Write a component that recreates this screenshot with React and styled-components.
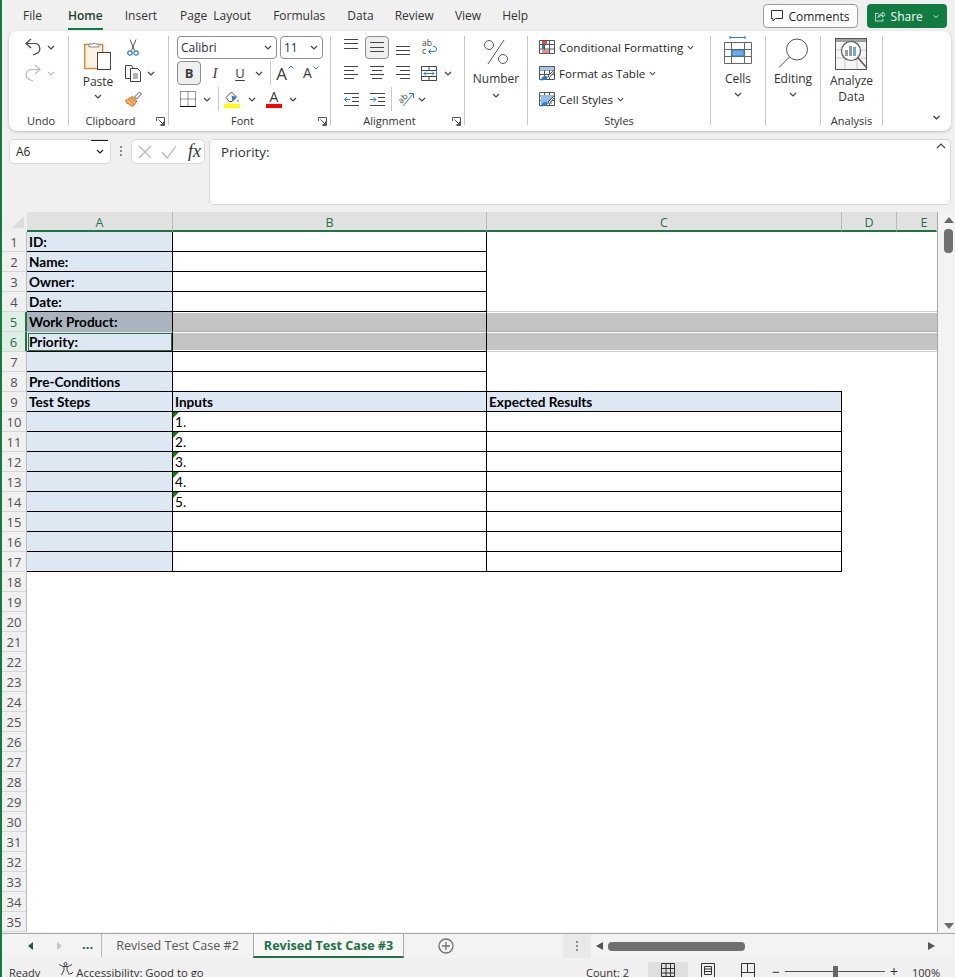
import React from 'react';
import styled, { createGlobalStyle } from 'styled-components';

const GlobalStyle = createGlobalStyle`
  html, body {
    margin: 0;
    padding: 0;
    background: #f0f0f0;
  }
  * { box-sizing: border-box; }
`;

const green = '#107c41';
const ink = '#3b3b3b';

const Window = styled.div`
  width: 955px;
  height: 977px;
  overflow: hidden;
  border-left: 2px solid ${green};
  background: #f0f0f0;
  color: #262626;
  font-family: "Open Sans", "Noto Sans", sans-serif;
  font-size: 12px;
`;

/* title row */
const TitleRow = styled.div`
  display: flex;
  align-items: center;
  height: 31px;
  padding: 0 8px 0 21px;
`;

const MenuTab = styled.div`
  position: relative;
  margin-right: ${(p) => p.$gap}px;
  padding-bottom: 1px;
  font-size: 12px;
  word-spacing: 3px;
  font-weight: ${(p) => (p.$active ? 600 : 400)};
  color: ${(p) => (p.$active ? '#1f3d2c' : '#333')};
  &::after {
    content: '';
    display: ${(p) => (p.$active ? 'block' : 'none')};
    position: absolute;
    left: 0;
    right: 0;
    bottom: -5px;
    height: 2px;
    background: ${green};
  }
`;

const TitleActions = styled.div`
  display: flex;
  gap: 9px;
  margin-left: auto;
  padding-top: 1px;
`;

const CommentsButton = styled.div`
  display: flex;
  align-items: center;
  justify-content: center;
  gap: 5px;
  width: 95px;
  height: 24px;
  background: #fff;
  border: 1px solid #9a9a9a;
  border-radius: 4px;
`;

const ShareButton = styled.div`
  display: flex;
  align-items: center;
  gap: 5px;
  width: 80px;
  height: 24px;
  padding-left: 8px;
  background: ${green};
  color: #fff;
  border-radius: 4px;
`;

/* ribbon */
const Ribbon = styled.div`
  display: flex;
  width: 942px;
  height: 100px;
  margin-left: 7px;
  background: #fff;
  border-radius: 8px;
  box-shadow: 0 1px 3px rgba(0, 0, 0, 0.22);
`;

const Group = styled.div`
  position: relative;
  display: flex;
  flex-direction: column;
  width: ${(p) => p.$w}px;
  height: 89px;
  margin-top: 5px;
  border-right: 1px solid #c9c9c9;
`;

const GroupBody = styled.div`
  display: flex;
  flex: none;
  flex-direction: ${(p) => (p.$row ? 'row' : 'column')};
  align-items: ${(p) => p.$align || 'stretch'};
  gap: ${(p) => (p.$row ? 0 : 4)}px;
  height: 78px;
  padding-left: ${(p) => p.$pad || 0}px;
`;

const GroupLabel = styled.div`
  flex: none;
  height: 14px;
  line-height: 14px;
  padding-left: ${(p) => p.$left || 0}px;
  padding-right: ${(p) => p.$right || 0}px;
  font-size: 11px;
  text-align: center;
  color: #333;
`;

const Launcher = styled.div`
  position: absolute;
  top: 81px;
  right: 3px;
  line-height: 0;
`;

const ToolRow = styled.div`
  display: flex;
  align-items: center;
  flex: none;
  height: 22px;
`;

const ToolColumn = styled.div`
  display: flex;
  flex-direction: column;
  gap: 4px;
  margin-left: ${(p) => p.$left || 0}px;
`;

const Tool = styled.div`
  display: flex;
  align-items: center;
  justify-content: center;
  flex: none;
  width: ${(p) => p.$w}px;
  color: ${ink};
  line-height: 1;
`;

const PressedTool = styled(Tool)`
  height: ${(p) => p.$h}px;
  margin: 0 ${(p) => p.$m || 0}px;
  background: #efefef;
  border: 1px solid #8f8f8f;
  border-radius: 4px;
`;

const ToolDivider = styled.div`
  flex: none;
  width: 1px;
  height: 24px;
  margin-left: ${(p) => p.$left || 0}px;
  background: #c9c9c9;
`;

const FontSelect = styled.div`
  display: flex;
  align-items: center;
  justify-content: space-between;
  width: ${(p) => p.$w}px;
  height: 23px;
  margin-right: 3px;
  padding: 0 4px 0 3px;
  border: 1px solid #8f8f8f;
  border-radius: 4px;
  font-size: 12px;
  color: #2a2a40;
`;

const LetterBold = styled.span`
  font-weight: 700;
  font-size: 13px;
`;

const LetterItalic = styled.span`
  font-family: "Liberation Serif", serif;
  font-style: italic;
  font-size: 15px;
`;

const LetterUnderline = styled.span`
  font-size: 13px;
  text-decoration: underline;
  text-underline-offset: 2px;
`;

const LetterGrow = styled.span`
  display: flex;
  align-items: flex-start;
  gap: 1px;
  font-size: ${(p) => p.$size}px;
`;

const PasteButton = styled.div`
  display: flex;
  flex-direction: column;
  align-items: center;
  width: 38px;
`;

const BigIconButton = styled.div`
  display: flex;
  flex-direction: column;
  align-items: center;
  padding-top: ${(p) => p.$top}px;
  width: 100%;
`;

const BigLabel = styled.div`
  margin-top: ${(p) => p.$mt}px;
  margin-bottom: ${(p) => p.$mb || 0}px;
  line-height: 16px;
  font-size: 12px;
  text-align: center;
  color: #333;
`;

const StyleRow = styled.div`
  display: flex;
  align-items: center;
  gap: 4px;
  height: 22px;
  font-size: 11.6px;
  white-space: nowrap;
`;

const Collapse = styled.div`
  align-self: flex-end;
  margin: 0 9px 11px auto;
  line-height: 0;
`;

/* formula bar */
const FormulaBar = styled.div`
  display: flex;
  margin: 8px 0 7px 7px;
  height: 66px;
`;

const NameBox = styled.div`
  position: relative;
  display: flex;
  align-items: center;
  justify-content: space-between;
  width: 102px;
  height: 25px;
  padding: 0 5px 0 6px;
  background: #fff;
  border: 1px solid #d8d8d8;
  border-radius: 5px;
  &::after {
    content: '';
    position: absolute;
    top: 0;
    right: 2px;
    width: 17px;
    height: 1px;
    background: #222;
  }
`;

const GripDots = styled.div`
  display: flex;
  flex-direction: column;
  align-items: center;
  gap: 2px;
  width: ${(p) => p.$w}px;
  padding-top: ${(p) => p.$top}px;
  & > i {
    width: 2px;
    height: 2px;
    background: #8a8a8a;
  }
`;

const FxBox = styled.div`
  display: flex;
  align-items: center;
  gap: 8px;
  width: 74px;
  height: 25px;
  padding: 0 3px 0 5px;
  background: #fff;
  border: 1px solid #d8d8d8;
  border-radius: 5px;
`;

const FxLabel = styled.span`
  margin-left: auto;
  font-family: "Liberation Serif", serif;
  font-style: italic;
  font-size: 18px;
  color: #333;
`;

const FormulaInput = styled.div`
  display: flex;
  justify-content: space-between;
  width: 742px;
  height: 66px;
  margin-left: 4px;
  padding: 3px 4px 0 11px;
  background: #fff;
  border: 1px solid #d8d8d8;
  border-radius: 5px;
  font-size: 13.3px;
  color: #333;
`;

/* sheet */
const SheetArea = styled.div`
  display: flex;
  height: 721px;
`;

const Sheet = styled.div`
  display: grid;
  grid-template-columns: 25px 146px 314px 355px 55px 40px;
  grid-auto-rows: 20px;
  width: 936px;
  height: 720px;
  border-right: 1px solid #a8a8a8;
  background: #fff;
`;

const Corner = styled.div`
  position: relative;
  background: #efefef;
  border-bottom: 2px solid #efefef;
  &::after {
    content: '';
    position: absolute;
    right: 3px;
    bottom: 2px;
    border-style: solid;
    border-width: 0 0 12px 12px;
    border-color: transparent transparent #dcdcdc transparent;
  }
`;

const ColHead = styled.div`
  display: flex;
  align-items: center;
  justify-content: center;
  background: #e1e1e1;
  border-right: 1px solid ${(p) => (p.$last ? '#e1e1e1' : '#b9b9b9')};
  border-bottom: 2px solid #217346;
  font-size: 12.5px;
  color: #217346;
  padding: 2px 0 0 ${(p) => (p.$last ? 15 : 0)}px;
`;

const RowHead = styled.div`
  display: flex;
  align-items: center;
  justify-content: center;
  padding-top: 1px;
  font-size: 13px;
  color: ${(p) => (p.$active ? '#217346' : '#505050')};
  background: ${(p) => (p.$active ? '#e0efe5' : '#f0f0f0')};
  border-bottom: 1px solid #d6d6d6;
  border-right: ${(p) => (p.$active ? '2px solid #217346' : '1px solid #bdbdbd')};
`;

const fills = {
  blue: '#dde8f3',
  gray: '#c4c4c4',
  dim: '#a9b4bf',
  none: '#fff',
};

const bottoms = {
  black: '1px solid #000',
  light: '1px solid #cfcfcf',
  mid: '1px solid #b0b0b0',
  none: '1px solid transparent',
};

const Cell = styled.div`
  position: relative;
  display: flex;
  align-items: center;
  padding: 1px 2px 0;
  overflow: visible;
  white-space: nowrap;
  font-family: "Lato", "Open Sans", sans-serif;
  font-size: 13.6px;
  font-weight: ${(p) => (p.$bold ? 700 : 400)};
  color: #000;
  background: ${(p) => fills[p.$fill || 'none']};
  border-right: ${(p) => (p.$right ? '1px solid #000' : 'none')};
  border-bottom: ${(p) => bottoms[p.$bottom || 'none']};
  ${(p) => p.$band === 'top' && 'box-shadow: inset 0 1px 0 #fff;'}
  ${(p) => p.$band === 'both' && 'box-shadow: inset 0 1px 0 #fff, inset 0 -1px 0 #fff;'}
  ${(p) => p.$sel && `outline: 1px solid #217346; outline-offset: -2px;`}
  ${(p) => p.$flag && `
    &::before {
      content: '';
      position: absolute;
      top: 0;
      left: 0;
      border-style: solid;
      border-width: 6px 6px 0 0;
      border-color: #0b7a0b transparent transparent transparent;
    }
  `}
`;

const VScroll = styled.div`
  display: flex;
  flex-direction: column;
  align-items: center;
  width: 17px;
  height: 720px;
  padding: 5px 0 3px 4px;
  background: #f3f3f3;
`;

const VThumb = styled.div`
  width: 9px;
  height: 24px;
  margin: 6px 0 auto;
  background: #707070;
  border-radius: 4px;
`;

const Arrow = styled.div`
  flex: none;
  width: 0;
  height: 0;
  border-style: solid;
  ${(p) => p.$dir === 'up' && `border-width: 0 5px 6px 5px; border-color: transparent transparent ${p.$color} transparent;`}
  ${(p) => p.$dir === 'down' && `border-width: 6px 5px 0 5px; border-color: ${p.$color} transparent transparent transparent;`}
  ${(p) => p.$dir === 'left' && `border-width: 4px ${p.$big ? 7 : 5}px 4px 0; border-color: transparent ${p.$color} transparent transparent;`}
  ${(p) => p.$dir === 'right' && `border-width: 4px 0 4px ${p.$big ? 7 : 5}px; border-color: transparent transparent transparent ${p.$color};`}
`;

/* sheet tabs */
const TabBar = styled.div`
  display: flex;
  align-items: stretch;
  height: 25px;
  background: #f3f3f3;
  border-top: 1px solid #a8a8a8;
`;

const TabNav = styled.div`
  display: flex;
  align-items: center;
  width: ${(p) => p.$w}px;
  padding-left: ${(p) => p.$pad}px;
  gap: ${(p) => p.$gap}px;
`;

const Ellipsis = styled.span`
  margin: -5px 0 0 -4px;
  font-weight: 700;
  font-size: 13px;
  color: #1b5e38;
`;

const SheetTab = styled.div`
  display: flex;
  align-items: center;
  justify-content: center;
  flex: none;
  width: ${(p) => (p.$active ? 151 : 152)}px;
  font-size: 12.6px;
  font-weight: ${(p) => (p.$active ? 700 : 400)};
  color: ${(p) => (p.$active ? '#217346' : '#555')};
  background: ${(p) => (p.$active ? '#f7f7f7' : 'transparent')};
  border-left: 1px solid ${(p) => (p.$active ? '#a8a8a8' : '#b5b5b5')};
  border-right: ${(p) => (p.$active ? '1px solid #a8a8a8' : 'none')};
  border-bottom: 2px solid ${(p) => (p.$active ? '#217346' : 'transparent')};
`;

const AddSheet = styled.div`
  display: flex;
  align-items: center;
  justify-content: center;
  flex: none;
  width: 84px;
`;

const TabGrip = styled.div`
  display: flex;
  align-items: center;
  justify-content: center;
  flex: none;
  width: 28px;
  margin-left: 75px;
  background: #e9e9e9;
`;

const HScroll = styled.div`
  display: flex;
  align-items: center;
  flex: none;
  width: 362px;
  padding-left: 5px;
`;

const HThumb = styled.div`
  width: 137px;
  height: 9px;
  margin: 0 auto 0 5px;
  background: #707070;
  border-radius: 4px;
`;

const HEnd = styled.div`
  margin-right: 18px;
`;

/* status bar */
const StatusBar = styled.div`
  display: flex;
  align-items: flex-start;
  height: 19px;
  margin-top: 4px;
  padding: 0 15px 0 7px;
  font-size: 11px;
  color: #333;
  line-height: 17px;
`;

const StatusText = styled.span`
  margin-left: ${(p) => p.$left || 0}px;
  margin-right: ${(p) => p.$right || 0}px;
  padding-top: 2px;
  font-size: ${(p) => p.$size || 11}px;
`;

const ViewButton = styled.div`
  display: flex;
  justify-content: center;
  width: 40px;
  height: 19px;
  padding-top: 1px;
  background: ${(p) => (p.$active ? '#dfdfdf' : 'transparent')};
`;

const ZoomArea = styled.div`
  display: flex;
  align-items: center;
  height: 15px;
  margin-top: 2px;
  margin-left: 4px;
  gap: 5px;
`;

const ZoomSign = styled.span`
  width: 8px;
  text-align: center;
  font-size: 14px;
  line-height: 15px;
`;

const ZoomTrack = styled.div`
  position: relative;
  width: 100px;
  height: 1px;
  background: #555;
`;

const ZoomThumb = styled.div`
  position: absolute;
  left: 48px;
  top: -5px;
  width: 5px;
  height: 11px;
  background: #666;
`;

const Spacer = styled.div`
  flex: 1;
`;

const ColorBar = styled.div`
  width: 16px;
  height: 4px;
  margin-top: 1px;
  background: ${(p) => p.$color};
`;

const Swatch = styled.div`
  display: flex;
  flex-direction: column;
  align-items: center;
  font-size: 14px;
  line-height: 13px;
`;

/* drawings */
const Chevron = ({ color = '#444', w = 8 }) => (
  <svg width={w} height="5" viewBox="0 0 8 5" fill="none">
    <path d="M1 1l3 3 3-3" stroke={color} strokeWidth="1.2" />
  </svg>
);

const Undo = ({ flip, color }) => (
  <svg width="16" height="18" viewBox="0 0 16 18" fill="none">
    <g transform={flip ? 'matrix(-1 0 0 1 16 0)' : undefined}>
      <path d="M6 1L1 5.5 6 10M1 5.5h8.5a5.2 5.2 0 0 1 1.5 10.2L8 17" stroke={color} strokeWidth="1.2" />
    </g>
  </svg>
);

const PasteIcon = () => (
  <svg width="28" height="31" viewBox="0 0 28 31" fill="none">
    <rect x="0.7" y="4.5" width="18" height="24" fill="#fdf1e2" stroke="#d9873a" strokeWidth="1.4" />
    <path d="M5 7V4h3.5a2 2 0 0 1 3 0H15v3z" fill="#fff" stroke="#8a8a8a" />
    <rect x="13.500" y="12.500" width="13" height="17" fill="#fff" stroke="#444" />
  </svg>
);

const Scissors = () => (
  <svg width="12" height="17" viewBox="0 0 12 17" fill="none">
    <path d="M3 0.5l4.500 11M9 0.500l-4.500 11" stroke="#555" />
    <circle cx="3" cy="14" r="2.200" stroke="#2b7cd3" strokeWidth="1.200" />
    <circle cx="9" cy="14" r="2.200" stroke="#2b7cd3" strokeWidth="1.200" />
  </svg>
);

const CopyIcon = () => (
  <svg width="17" height="17" viewBox="0 0 17 17" fill="none">
    <path d="M5.500 13.500h-5V0.500h6l2 3" stroke="#444" />
    <path d="M5.500 3.500h7l3 3v10h-10z" fill="#fff" stroke="#444" />
    <path d="M8 9h5M8 11h5M8 13h5" stroke="#666" />
  </svg>
);

const BrushIcon = () => (
  <svg width="17" height="16" viewBox="0 0 17 16" fill="none">
    <path d="M0.500 9.500l6.500-4 5 4.500-4 5.500-3.500-1.500L3 12l-1 .5z" fill="#f6b26b" stroke="#d9762a" />
    <path d="M3.500 8l6 6M6 7l5 4.500" stroke="#d9762a" />
    <path d="M9.500 6l5-5 2 2-5 5z" fill="#fff" stroke="#555" />
  </svg>
);

const FontSizeCaret = ({ down }) => (
  <svg width="6" height="4" viewBox="0 0 6 4" fill="none">
    <path d={down ? 'M0.500 0.500L3 3l2.500-2.500' : 'M0.500 3.500L3 1l2.500 2.500'} stroke="#2b7cd3" />
  </svg>
);

const BordersIcon = () => (
  <svg width="16" height="16" viewBox="0 0 16 16" fill="none">
    <path d="M0.500 0.500h15v15M0.500 0.500v15M8 0.500v15M0.500 8h15" stroke="#333" strokeDasharray="1 1" />
    <path d="M0 15.500h16" stroke="#111" />
  </svg>
);

const BucketIcon = () => (
  <svg width="15" height="12" viewBox="0 0 15 12" fill="none">
    <path d="M1 6.500L6.500 1l5 5-4.500 4.500h-3z" stroke="#555" />
    <path d="M6.500 4.500L11.500 6 7.500 10.500z" fill="#2b7cd3" />
    <path d="M13 8l1 2.500h-2z" fill="#2b7cd3" />
  </svg>
);

const Lines = ({ rows, w = 14, h = 14 }) => (
  <svg width={w} height={h} viewBox={`0 0 ${w} ${h}`} fill="none">
    {rows.map(([x1, x2, y]) => (
      <path key={`${x1}-${x2}-${y}`} d={`M${x1} ${y}.5H${x2}`} stroke="#444" />
    ))}
  </svg>
);

const WrapIcon = () => (
  <svg width="16" height="18" viewBox="0 0 16 18" fill="none">
    <text x="1" y="8" fontSize="8.500" fontFamily="Open Sans, sans-serif" fill="#444">ab</text>
    <text x="1" y="16" fontSize="8.500" fontFamily="Open Sans, sans-serif" fill="#444">c</text>
    <path d="M8 13.500h5a2 2 0 0 0 0-5h-1M10 11l-2.500 2.500L10 16" stroke="#2b7cd3" />
  </svg>
);

const MergeIcon = () => (
  <svg width="16" height="15" viewBox="0 0 16 15" fill="none">
    <path d="M0.500 0.500h15v14h-15zM0.500 4.500h15M0.500 10.500h15M8 0.500v4M8 10.500v4" stroke="#444" />
    <path d="M0.500 4.500v6M15.500 4.500v6" stroke="#2b7cd3" />
    <path d="M3 7.500h10M5 5.500l-2 2 2 2M11 5.500l2 2-2 2" stroke="#2b7cd3" />
  </svg>
);

const IndentIcon = ({ right }) => (
  <svg width="15" height="13" viewBox="0 0 15 13" fill="none">
    <path d="M0 0.500h15M8 4.500h7M8 8.500h7M0 12.500h15" stroke="#444" />
    <path d={right ? 'M0 6.500h6M3.500 4l2.500 2.500L3.500 9' : 'M6 6.500H0.500M3 4L0.500 6.500 3 9'} stroke="#2b7cd3" />
  </svg>
);

const OrientIcon = () => (
  <svg width="17" height="16" viewBox="0 0 17 16" fill="none">
    <text x="1" y="11" fontSize="8.500" fontFamily="Open Sans, sans-serif" fill="#444" transform="rotate(-45 5 8)">ab</text>
    <path d="M6 15L16 3M12 2.500h4.500V7" stroke="#2b7cd3" />
  </svg>
);

const PercentIcon = () => (
  <svg width="26" height="26" viewBox="0 0 26 26" fill="none">
    <circle cx="6" cy="6" r="4.500" stroke="#555" />
    <circle cx="20" cy="20" r="4.500" stroke="#555" />
    <path d="M21 1L5 25" stroke="#555" />
  </svg>
);

const CondIcon = () => (
  <svg width="16" height="14" viewBox="0 0 16 14" fill="none">
    <path d="M0.500 0.500h15v13h-15zM5.500 0.500v13M10.500 0.500v13M0.500 4.500h15M0.500 9h15" stroke="#555" />
    <rect x="3" y="1" width="5" height="3" fill="#e8474c" />
    <rect x="3" y="5" width="2" height="4" fill="#2b7cd3" />
    <rect x="3" y="10" width="7" height="3" fill="#f08a8c" />
  </svg>
);

const TableBrushIcon = ({ header }) => (
  <svg width="16" height="15" viewBox="0 0 16 15" fill="none">
    <path d="M0.500 0.500h15v13h-15zM0.500 4h15M5.500 0.500v13M10.500 0.500v13M0.500 8.500h15" stroke="#555" />
    {!header && <rect x="2" y="3" width="11" height="9" fill="#8dbdec" />}
    {header && <rect x="1" y="1" width="14" height="3" fill="#a9c9ec" />}
    <path d="M15.500 3.500L9 10l1.500 1.500 5-6z" fill="#fff" stroke="#555" />
    <path d="M1.500 14.500c1-3 3-5 6-4.500l1.500 1.500c-1 2-4 3-7.500 3z" fill="#2b7cd3" />
  </svg>
);

const CellsIcon = () => (
  <svg width="28" height="28" viewBox="0 0 28 28" fill="none">
    <path d="M6 1.500h15M6 0v3M21 0v3" stroke="#2b7cd3" />
    <path d="M0.500 6.500h27v21h-27zM0.500 13.500h27M0.500 20.500h27M7.500 6.500v21M20.500 6.500v21" stroke="#666" />
    <rect x="8" y="14" width="12" height="6" fill="#6eaae3" stroke="#2b7cd3" />
  </svg>
);

const EditingIcon = () => (
  <svg width="31" height="30" viewBox="0 0 31 30" fill="none">
    <circle cx="19" cy="11.500" r="10.500" fill="#fff" stroke="#555" />
    <path d="M11.500 19L1 29.500" stroke="#555" />
  </svg>
);

const AnalyzeIcon = () => (
  <svg width="33" height="33" viewBox="0 0 33 33" fill="none">
    <rect x="0.500" y="0.500" width="31" height="31" fill="#f5f5f5" stroke="#555" />
    <rect x="1" y="1" width="30" height="3" fill="#a0a0a0" />
    <path d="M1 12h30M1 20h30M10 4v27M22 4v27" stroke="#c9c9c9" />
    <circle cx="16" cy="13" r="9.500" fill="#fff" stroke="#555" strokeWidth="1.200" />
    <rect x="10" y="12" width="3" height="6" fill="#9a9a9a" />
    <rect x="14" y="8" width="3" height="10" fill="#9a9a9a" />
    <rect x="18" y="9" width="3" height="9" fill="#6eaae3" />
    <path d="M23 20l9 10" stroke="#555" strokeWidth="1.400" />
  </svg>
);

const LauncherIcon = () => (
  <svg width="9" height="9" viewBox="0 0 9 9" fill="none">
    <path d="M0.500 4V0.500H8.500M8.500 0.500V8.500H4.500M2.500 2.500l5 5M4.500 7.500h3v-3" stroke="#555" />
  </svg>
);

const BubbleIcon = () => (
  <svg width="12" height="12" viewBox="0 0 12 12" fill="none">
    <path d="M0.500 0.500h11v8h-7l-2.500 2.500v-2.500h-1.500z" stroke="#333" />
  </svg>
);

const ShareIcon = () => (
  <svg width="14" height="13" viewBox="0 0 14 13" fill="none">
    <path d="M4.500 2.500h-4v10h10v-3" stroke="#fff" />
    <path d="M4 8c0-3 2.500-5 6-5V0.800L13.500 4 10 7.200V5C7.500 5 5.500 6 4 8z" stroke="#fff" />
  </svg>
);

const CrossIcon = () => (
  <svg width="16" height="16" viewBox="0 0 16 16" fill="none">
    <path d="M2 2l12 12M14 2L2 14" stroke="#b5b5b5" strokeWidth="1.200" />
  </svg>
);

const CheckIcon = () => (
  <svg width="16" height="14" viewBox="0 0 16 14" fill="none">
    <path d="M1 7l5 6L15 1" stroke="#b5b5b5" strokeWidth="1.200" />
  </svg>
);

const PlusCircle = () => (
  <svg width="16" height="16" viewBox="0 0 16 16" fill="none">
    <circle cx="8" cy="8" r="7" stroke="#707070" strokeWidth="1.300" />
    <path d="M8 4v8M4 8h8" stroke="#707070" strokeWidth="1.300" />
  </svg>
);

const PersonIcon = () => (
  <svg width="15" height="14" viewBox="0 0 15 14" fill="none">
    <circle cx="7.500" cy="2" r="1.500" stroke="#444" />
    <path d="M1 2.500l4 2h5l4-2M6 5v3l-2.500 5M9 5v3l2.500 5" stroke="#444" />
    <path d="M12 11l1 1 2-2" stroke="#444" />
  </svg>
);

const NormalViewIcon = () => (
  <svg width="14" height="15" viewBox="0 0 14 15" fill="none">
    <path d="M0.500 0.500h13v13h-13zM0.500 5.500h13M0.500 10h13M5 0.500v13M9.500 0.500v13" stroke="#333" />
  </svg>
);

const PageViewIcon = () => (
  <svg width="14" height="15" viewBox="0 0 14 15" fill="none">
    <path d="M0.500 0.500h13v14h-13zM3.500 3.500h7v8h-7zM3.500 6h7M3.500 8.500h7" stroke="#333" />
  </svg>
);

const BreakViewIcon = () => (
  <svg width="14" height="15" viewBox="0 0 14 15" fill="none">
    <path d="M0.500 14V0.500h13V14M0.500 9.500h6V0.500M6.500 9.500h7" stroke="#333" />
  </svg>
);

const menus = [
  ['File', 26],
  ['Home', 22, true],
  ['Insert', 23],
  ['Page Layout', 22],
  ['Formulas', 22],
  ['Data', 21],
  ['Review', 21],
  ['View', 21],
  ['Help', 0],
];

const alignTop = [[0, 14, 3], [0, 14, 7], [0, 14, 12]];
const alignMid = [[0, 14, 5], [0, 14, 10], [0, 14, 14]];
const alignBottom = [[0, 14, 10], [0, 14, 14], [0, 14, 18]];
const alignLeft = [[0, 14, 0], [0, 10, 4], [0, 14, 8], [0, 10, 12]];
const alignCenter = [[0, 14, 0], [2, 12, 4], [0, 14, 8], [2, 12, 12]];
const alignRight = [[0, 14, 0], [4, 14, 4], [0, 14, 8], [4, 14, 12]];

const RibbonBar = () => (
  <Ribbon>
    <Group $w={60}>
      <GroupBody $pad={14}>
        <ToolRow>
          <Tool $w={20}><Undo color="#444" /></Tool>
          <Tool $w={16}><Chevron /></Tool>
        </ToolRow>
        <ToolRow>
          <Tool $w={20}><Undo flip color="#bcbcbc" /></Tool>
          <Tool $w={16}><Chevron color="#bcbcbc" /></Tool>
        </ToolRow>
      </GroupBody>
      <GroupLabel $left={5}>Undo</GroupLabel>
    </Group>

    <Group $w={100}>
      <GroupBody $row $pad={10}>
        <PasteButton>
          <BigIconButton $top={4}>
            <PasteIcon />
            <BigLabel $mt={3} $mb={4}>Paste</BigLabel>
            <Chevron />
          </BigIconButton>
        </PasteButton>
        <ToolColumn $left={5}>
          <ToolRow><Tool $w={22}><Scissors /></Tool></ToolRow>
          <ToolRow>
            <Tool $w={22}><CopyIcon /></Tool>
            <Tool $w={14}><Chevron /></Tool>
          </ToolRow>
          <ToolRow><Tool $w={22}><BrushIcon /></Tool></ToolRow>
        </ToolColumn>
      </GroupBody>
      <GroupLabel $right={16}>Clipboard</GroupLabel>
      <Launcher><LauncherIcon /></Launcher>
    </Group>

    <Group $w={162}>
      <GroupBody $pad={8}>
        <ToolRow>
          <FontSelect $w={100}>Calibri<Chevron /></FontSelect>
          <FontSelect $w={43}>11<Chevron /></FontSelect>
        </ToolRow>
        <ToolRow>
          <PressedTool $w={24} $h={24}><LetterBold>B</LetterBold></PressedTool>
          <Tool $w={28}><LetterItalic>I</LetterItalic></Tool>
          <Tool $w={22}><LetterUnderline>U</LetterUnderline></Tool>
          <Tool $w={16}><Chevron /></Tool>
          <ToolDivider $left={3} />
          <Tool $w={28}><LetterGrow $size={17}>A<FontSizeCaret /></LetterGrow></Tool>
          <Tool $w={24}><LetterGrow $size={14}>A<FontSizeCaret down /></LetterGrow></Tool>
        </ToolRow>
        <ToolRow>
          <Tool $w={22}><BordersIcon /></Tool>
          <Tool $w={16}><Chevron /></Tool>
          <ToolDivider $left={3} />
          <Tool $w={26}><Swatch><BucketIcon /><ColorBar $color="#ffff00" /></Swatch></Tool>
          <Tool $w={14}><Chevron /></Tool>
          <Tool $w={30}><Swatch>A<ColorBar $color="#ff0000" /></Swatch></Tool>
          <Tool $w={8}><Chevron /></Tool>
        </ToolRow>
      </GroupBody>
      <GroupLabel $right={14}>Font</GroupLabel>
      <Launcher><LauncherIcon /></Launcher>
    </Group>

    <Group $w={134}>
      <GroupBody $pad={7}>
        <ToolRow>
          <Tool $w={26}><Lines rows={alignTop} h={22} /></Tool>
          <PressedTool $w={24} $h={23} $m={1}><Lines rows={alignMid} h={21} /></PressedTool>
          <Tool $w={26}><Lines rows={alignBottom} h={22} /></Tool>
          <Tool $w={26}><WrapIcon /></Tool>
        </ToolRow>
        <ToolRow>
          <Tool $w={26}><Lines rows={alignLeft} /></Tool>
          <Tool $w={26}><Lines rows={alignCenter} /></Tool>
          <Tool $w={26}><Lines rows={alignRight} /></Tool>
          <Tool $w={26}><MergeIcon /></Tool>
          <Tool $w={12}><Chevron /></Tool>
        </ToolRow>
        <ToolRow>
          <Tool $w={26}><IndentIcon /></Tool>
          <Tool $w={26}><IndentIcon right /></Tool>
          <ToolDivider $left={1} />
          <Tool $w={26}><OrientIcon /></Tool>
          <Tool $w={8}><Chevron /></Tool>
        </ToolRow>
      </GroupBody>
      <GroupLabel $right={16}>Alignment</GroupLabel>
      <Launcher><LauncherIcon /></Launcher>
    </Group>

    <Group $w={63}>
      <GroupBody $align="center">
        <BigIconButton $top={3}>
          <PercentIcon />
          <BigLabel $mt={6} $mb={6}>Number</BigLabel>
          <Chevron />
        </BigIconButton>
      </GroupBody>
    </Group>

    <Group $w={183}>
      <GroupBody $pad={11}>
        <StyleRow><CondIcon />Conditional Formatting<Chevron w={7} /></StyleRow>
        <StyleRow><TableBrushIcon header />Format as Table<Chevron w={7} /></StyleRow>
        <StyleRow><TableBrushIcon />Cell Styles<Chevron w={7} /></StyleRow>
      </GroupBody>
      <GroupLabel>Styles</GroupLabel>
    </Group>

    <Group $w={55}>
      <GroupBody $align="center">
        <BigIconButton $top={0}>
          <CellsIcon />
          <BigLabel $mt={7} $mb={5}>Cells</BigLabel>
          <Chevron />
        </BigIconButton>
      </GroupBody>
    </Group>

    <Group $w={55}>
      <GroupBody $align="center">
        <BigIconButton $top={2}>
          <EditingIcon />
          <BigLabel $mt={3} $mb={5}>Editing</BigLabel>
          <Chevron />
        </BigIconButton>
      </GroupBody>
    </Group>

    <Group $w={62}>
      <GroupBody $align="center">
        <BigIconButton $top={2}>
          <AnalyzeIcon />
          <BigLabel $mt={2}>Analyze<br />Data</BigLabel>
        </BigIconButton>
      </GroupBody>
      <GroupLabel>Analysis</GroupLabel>
    </Group>

    <Collapse><Chevron w={11} color="#333" /></Collapse>
  </Ribbon>
);

const labels = {
  1: 'ID:',
  2: 'Name:',
  3: 'Owner:',
  4: 'Date:',
  5: 'Work Product:',
  6: 'Priority:',
  8: 'Pre-Conditions',
  9: 'Test Steps',
};

const SheetRow = ({ n }) => {
  const inTable = n <= 17;
  const selected = n === 5 || n === 6;
  const band = n === 5 ? 'top' : n === 6 ? 'both' : undefined;
  const gridLine = n === 4 || n === 6 ? 'light' : n === 5 ? 'mid' : 'none';
  const tableLine = n === 5 ? 'mid' : inTable ? 'black' : 'none';
  const stepRow = n >= 10 && n <= 14;
  const lowerTable = n >= 9 && n <= 17;

  return (
    <>
      <RowHead $active={selected}>{n}</RowHead>
      <Cell
        $bold
        $fill={!inTable ? 'none' : n === 5 ? 'dim' : 'blue'}
        $right={inTable}
        $bottom={tableLine}
        $sel={n === 6}
      >
        {labels[n]}
      </Cell>
      <Cell
        $bold={n === 9}
        $fill={selected ? 'gray' : n === 9 ? 'blue' : 'none'}
        $band={band}
        $right={inTable}
        $bottom={tableLine}
        $flag={stepRow}
      >
        {n === 9 && 'Inputs'}
        {stepRow && `${n - 9}.`}
      </Cell>
      <Cell
        $bold={n === 9}
        $fill={selected ? 'gray' : n === 9 ? 'blue' : 'none'}
        $band={band}
        $right={lowerTable}
        $bottom={n === 8 || lowerTable ? 'black' : gridLine}
      >
        {n === 9 && 'Expected Results'}
      </Cell>
      <Cell $fill={selected ? 'gray' : 'none'} $band={band} $bottom={gridLine} />
      <Cell $fill={selected ? 'gray' : 'none'} $band={band} $bottom={gridLine} />
    </>
  );
};

const rowNumbers = Array.from({ length: 35 }, (_, i) => i + 1);

const App = () => (
  <>
    <GlobalStyle />
    <Window>
      <TitleRow>
        {menus.map(([name, gap, active]) => (
          <MenuTab key={name} $gap={gap} $active={active}>{name}</MenuTab>
        ))}
        <TitleActions>
          <CommentsButton><BubbleIcon />Comments</CommentsButton>
          <ShareButton><ShareIcon />Share<Spacer /><Chevron color="#fff" /><span>&nbsp;</span></ShareButton>
        </TitleActions>
      </TitleRow>

      <RibbonBar />

      <FormulaBar>
        <NameBox>A6<Chevron w={10} color="#222" /></NameBox>
        <GripDots $w={20} $top={7}><i /><i /><i /></GripDots>
        <FxBox><CrossIcon /><CheckIcon /><FxLabel>fx</FxLabel></FxBox>
        <FormulaInput>Priority:<svg width="10" height="6" viewBox="0 0 10 6" fill="none"><path d="M1 5l4-4 4 4" stroke="#444" strokeWidth="1.200" /></svg></FormulaInput>
      </FormulaBar>

      <SheetArea>
        <Sheet>
          <Corner />
          {['A', 'B', 'C', 'D', 'E'].map((col) => (
            <ColHead key={col} $last={col === 'E'}>{col}</ColHead>
          ))}
          {rowNumbers.map((n) => <SheetRow key={n} n={n} />)}
        </Sheet>
        <VScroll>
          <Arrow $dir="up" $color="#6a6a6a" />
          <VThumb />
          <Arrow $dir="down" $color="#6a6a6a" />
        </VScroll>
      </SheetArea>

      <TabBar>
        <TabNav $w={99} $pad={26} $gap={24}>
          <Arrow $dir="left" $color="#1b5e38" />
          <Arrow $dir="right" $color="#c4c4c4" />
          <Ellipsis>...</Ellipsis>
        </TabNav>
        <SheetTab>Revised Test Case #2</SheetTab>
        <SheetTab $active>Revised Test Case #3</SheetTab>
        <AddSheet><PlusCircle /></AddSheet>
        <TabGrip><GripDots $w={4} $top={0}><i /><i /><i /></GripDots></TabGrip>
        <HScroll>
          <Arrow $dir="left" $big $color="#555" />
          <HThumb />
          <HEnd><Arrow $dir="right" $big $color="#555" /></HEnd>
        </HScroll>
      </TabBar>

      <StatusBar>
        <StatusText>Ready</StatusText>
        <ToolColumn $left={18}><PersonIcon /></ToolColumn>
        <StatusText $left={3} $size={11.3}>Accessibility: Good to go</StatusText>
        <Spacer />
        <StatusText $right={19}>Count: 2</StatusText>
        <ViewButton $active><NormalViewIcon /></ViewButton>
        <ViewButton><PageViewIcon /></ViewButton>
        <ViewButton><BreakViewIcon /></ViewButton>
        <ZoomArea>
          <ZoomSign>−</ZoomSign>
          <ZoomTrack><ZoomThumb /></ZoomTrack>
          <ZoomSign>+</ZoomSign>
          <StatusText $left={9}>100%</StatusText>
        </ZoomArea>
      </StatusBar>
    </Window>
  </>
);

export default App;
